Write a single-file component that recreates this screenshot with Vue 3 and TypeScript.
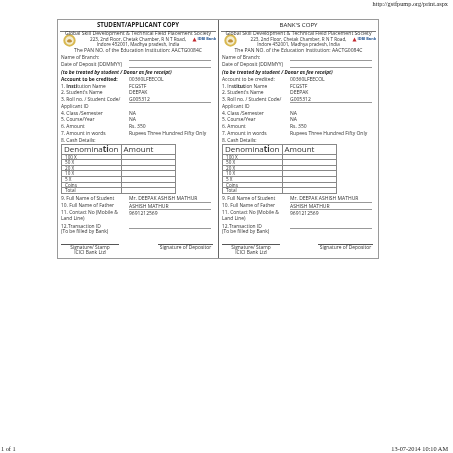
<script setup lang="ts">
interface Row { label: string; value: string; line?: boolean }
interface Copy { title: string; strong: boolean; boldPart: [string, string, string] }

const copies: Copy[] = [
  { title: 'STUDENT/APPLICANT COPY', strong: true, boldPart: ['1. ', 'Insti', 'tution Name'] },
  { title: "BANK'S COPY", strong: false, boldPart: ['1. Ins', 'titut', 'ion Name'] },
]

const beforeRows: Row[] = [
  { label: "2. Student's Name", value: 'DEEPAK' },
  { label: '3. Roll no. / Student Code/\nApplicant ID', value: 'G005312', line: true },
  { label: '4. Class /Semester', value: 'NA' },
  { label: '5. Course/Year', value: 'NA' },
  { label: '6. Amount', value: 'Rs. 350' },
  { label: '7. Amount in words', value: 'Rupees Three Hundred Fifty Only' },
]

const denominations = ['100 X', '50 X', '20 X', '10 X', '5 X', 'Coins', 'Total']

const afterRows: Row[] = [
  { label: '9. Full Name of Student', value: 'Mr. DEEPAK ASHISH MATHUR', line: true },
  { label: '10. Full Name of Father', value: 'ASHISH MATHUR', line: true },
  { label: '11. Contact No (Mobile &\nLand Line)', value: '9691212569' },
  { label: '12.Transaction ID\n(To be filled by Bank)', value: '', line: true },
]
</script>

<template>
  <div class="page">
    <div class="url">http://gstfpump.org/print.aspx</div>
    <main class="sheet">
      <section v-for="copy in copies" :key="copy.title" class="copy">
        <h1 class="title" :class="{ regular: !copy.strong }">{{ copy.title }}</h1>
        <header class="org">
          <svg class="emblem" viewBox="0 0 20 20">
            <circle cx="10" cy="10" r="8" fill="#f3edd0" stroke="#d8b850" stroke-width="3" />
            <path d="M6 11c2-4 6-4 8 0-2 3-6 3-8 0z" fill="#c1923a" />
          </svg>
          <div class="org-text">
            <div class="org-first">Global Skill Development &amp; Technical Field Placement Society</div>
            <div>223, 2nd Floor, Chetak Chamber, R N T Road,</div>
            <div>Indore 452001, Madhya pradesh, India</div>
          </div>
          <div class="bank">
            <svg viewBox="0 0 10 10" class="bank-mark"><path d="M1 9 5 1l4 8z" fill="#c2272d" /></svg>
            <span>IDBI Bank</span>
          </div>
        </header>
        <div class="pan">The PAN NO. of the Education Institution: AACTG0084C</div>

        <div class="row tight"><span>Name of Branch:</span><span class="val ruled"></span></div>
        <div class="row tight"><span>Date of Deposit (DDMMYY)</span><span class="val ruled"></span></div>
        <div class="treat">(to be treated by student / Donor as fee receipt)</div>
        <div class="row"><span :class="{ strong: copy.strong }">Account to be credited:</span><span class="val">00360LFEECOL</span></div>
        <div class="row">
          <span>{{ copy.boldPart[0] }}<b>{{ copy.boldPart[1] }}</b>{{ copy.boldPart[2] }}</span>
          <span class="val">FCGSTF</span>
        </div>
        <div v-for="r in beforeRows" :key="r.label" class="row">
          <span class="label">{{ r.label }}</span>
          <span class="val" :class="{ ruled: r.line }">{{ r.value }}</span>
        </div>
        <div class="row"><span>8. Cash Details:</span></div>

        <table class="cash">
          <colgroup><col class="col-a" /><col class="col-b" /></colgroup>
          <thead>
            <tr><th>Denomina<b>ti</b>on</th><th>Amount</th></tr>
          </thead>
          <tbody>
            <tr v-for="d in denominations" :key="d"><td>{{ d }}</td><td></td></tr>
          </tbody>
        </table>

        <div v-for="r in afterRows" :key="r.label" class="row after">
          <span class="label">{{ r.label }}</span>
          <span class="val" :class="{ ruled: r.line }">{{ r.value }}</span>
        </div>

        <footer class="signs">
          <div class="sign"><div>Signature/ Stamp</div><div>ICICI Bank Ltd</div></div>
          <div class="sign"><div>Signature of Depositor</div></div>
        </footer>
      </section>
    </main>
    <div class="foot"><span>1 of 1</span><span>13-07-2014 10:10 AM</span></div>
  </div>
</template>

<style>
body { margin: 0; background: #fff; }
</style>

<style scoped>
.page {
  width: 453px;
  height: 453px;
  display: flex;
  flex-direction: column;
  box-sizing: border-box;
  padding: 0 5px 0 1px;
  overflow: hidden;
  font-family: "Open Sans", sans-serif;
  color: #333;
}
.url, .foot {
  font-family: "Liberation Serif", serif;
  font-size: 6.3px;
  line-height: 7px;
  color: #222;
  filter: blur(0.2px);
}
.url { text-align: right; height: 7px; }
.foot {
  display: flex;
  justify-content: space-between;
  margin-top: auto;
  height: 7px;
  padding-bottom: 1px;
}
.sheet {
  display: grid;
  grid-template-columns: 160px 160px;
  width: 320px;
  height: 238px;
  margin: 12px 0 0 56px;
  border: 1px solid #9a9a9a;
  filter: blur(0.3px);
}
.copy {
  box-sizing: border-box;
  padding: 0 3px;
  font-size: 4.9px;
  line-height: 6.75px;
  display: flex;
  flex-direction: column;
  min-width: 0;
}
.copy + .copy { border-left: 1px solid #666; }
.title {
  margin: 0 -1px;
  height: 10.5px;
  font-size: 6.1px;
  line-height: 10.5px;
  text-align: center;
  font-weight: 700;
  color: #222;
  border-bottom: 1px solid #777;
}
.title.regular { font-weight: 400; }
.org {
  display: flex;
  align-items: center;
  height: 15px;
  position: relative;
}
.emblem { width: 13px; height: 13px; margin: 2px 0 0 2px; flex: none; }
.org-text {
  flex: 1;
  text-align: center;
  line-height: 5px;
  font-size: 4.6px;
  margin-left: -15px;
  white-space: nowrap;
}
.org-first { font-size: 5.15px; line-height: 5.8px; margin-top: -0.8px; }
.bank {
  position: absolute;
  right: -1px;
  top: 5px;
  display: flex;
  align-items: center;
  font-size: 3.8px;
  font-weight: 700;
  color: #1c4f8f;
  line-height: 4px;
}
.bank-mark { width: 5px; height: 5px; }
.pan { text-align: center; height: 7px; font-size: 5px; }
.row {
  display: grid;
  grid-template-columns: 68px 82px;
  min-height: 6.75px;
}
.row.tight { min-height: 6.6px; line-height: 6.6px; }
.label { white-space: pre-line; }
.row .val { white-space: nowrap; font-size: 5px; }
.ruled { border-bottom: 0.6px solid #999; height: 6.2px; }
.strong { font-weight: 700; color: #222; }
.treat { font-weight: 700; font-style: italic; color: #222; height: 8px; line-height: 8px; }
.cash {
  width: 114px;
  margin: 0.6px 0 1.6px;
  border-collapse: collapse;
  table-layout: fixed;
  font-size: 4.6px;
  line-height: 4.6px;
}
.col-a { width: 59.5px; }
.col-b { width: 54.5px; }
.cash th, .cash td {
  box-sizing: border-box;
  border: 0.6px solid #888;
  padding: 0 3px;
  text-align: left;
  font-weight: 400;
  overflow: hidden;
  white-space: nowrap;
}
.cash td { height: 5.6px; }
.cash th {
  font-size: 8px;
  line-height: 8.6px;
  height: 9.5px;
  padding: 0 2px;
  color: #333;
}
.cash th b { font-weight: 700; }
.row.after .label { line-height: 5.5px; padding: 0.6px 0; }
.row.after:last-of-type { margin-top: 1.5px; }
.row.after:last-of-type .val { height: 4.5px; }
.signs {
  display: grid;
  grid-template-columns: 58px 55px;
  justify-content: space-between;
  margin-top: 8px;
  padding-right: 2px;
  text-align: center;
  line-height: 5.1px;
}
.sign { border-top: 0.7px solid #555; padding-top: 0.6px; }
</style>
